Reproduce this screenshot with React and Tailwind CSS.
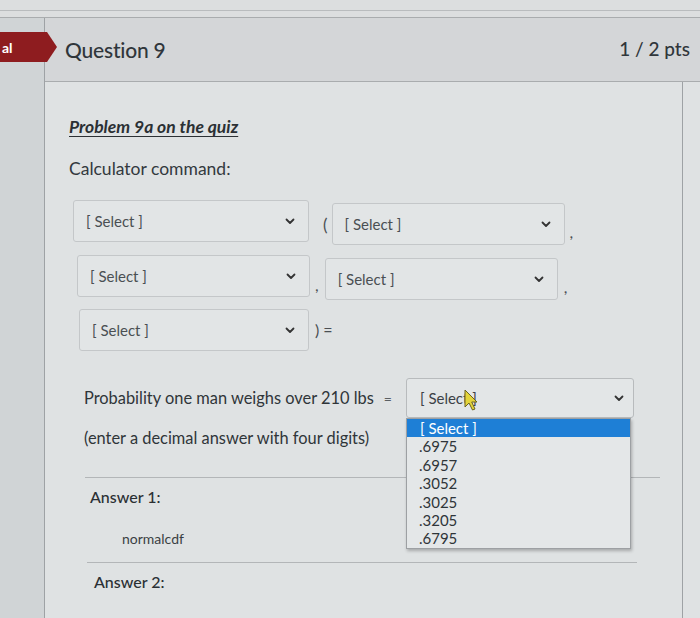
import React from 'react';

const font = { fontFamily: 'Lato, "Open Sans", sans-serif' };

const Chevron = () => (
    <svg width="12" height="12" viewBox="0 0 12 12" className="shrink-0">
        <path d="M2.5 4.5 L6 8 L9.5 4.5" fill="none" stroke="#333" strokeWidth="1.8" strokeLinecap="round" strokeLinejoin="round" />
    </svg>
);

const SelectBox = ({ className = '' }) => (
    <div className={`h-[42px] border border-[#c4c7c9] rounded-[3px] bg-[#e2e5e6] flex items-center justify-between pl-3 pr-3 text-[15px] text-[#4a4f53] ${className}`}>
        <span>[ Select ]</span>
        <Chevron />
    </div>
);

const OPTIONS = ['.6975', '.6957', '.3052', '.3025', '.3205', '.6795'];

const Cursor = () => (
    <svg width="18" height="24" viewBox="0 0 18 24" className="absolute left-[57px] top-[11px] z-20">
        <path d="M2 1 L2 18 L6 14 L9.5 21 L12 20 L8.7 13 L14 13 Z" fill="#e3d43a" stroke="#6b6320" strokeWidth="1" strokeLinejoin="round" />
    </svg>
);

export default function App() {
    return (
        <div className="w-[700px] h-[618px] overflow-hidden bg-[#d9dcdd] flex flex-col relative" style={font}>
            {/* top strip */}
            <div className="h-[18px] shrink-0 border-b border-[#a9acae] bg-[#dcdedf]">
                <div className="h-[11px] border-b border-[#b9bcbe]" />
            </div>

            <div className="flex flex-1 min-h-0">
                {/* left rail */}
                <div className="w-[45px] shrink-0 bg-[#d0d4d6] border-r border-[#9ea2a5]" />

                {/* question card */}
                <div className="flex-1 flex flex-col min-w-0">
                    <div className="h-[64px] shrink-0 bg-[#d4d6d8] border-b border-[#a9acae] flex items-center justify-between pl-[20px] pr-[10px]">
                        <span className="text-[21px] text-[#30363b] font-medium tracking-[-0.2px]">Question 9</span>
                        <span className="text-[19px] text-[#30363b] font-medium">1 / 2 pts</span>
                    </div>

                    <div className="flex-1 bg-[#dfe2e3] flex">
                        <div className="w-[638px] shrink-0 border-r border-[#9ea2a5] pl-[24px] pt-[33px]">
                            <div className="text-[17.5px] font-bold italic underline underline-offset-[3px] text-[#2b3034] leading-[24px]">
                                Problem 9a on the quiz
                            </div>
                            <div className="mt-[18px] text-[17.5px] text-[#33393e] leading-[24px]">Calculator command:</div>

                            <div className="mt-[19px] ml-[4px] flex flex-col gap-[9px] text-[#4a4f53]">
                                <div className="flex items-start h-[46px]">
                                    <SelectBox className="w-[236px]" />
                                    <span className="ml-[14px] mr-[4px] text-[17px] mt-[12px]">(</span>
                                    <SelectBox className="w-[233px] mt-[3px]" />
                                    <span className="ml-[5px] text-[16px] mt-[20px]">,</span>
                                </div>
                                <div className="flex items-start h-[45px]">
                                    <SelectBox className="w-[233px] ml-[4px]" />
                                    <span className="ml-[5px] mr-[6px] text-[16px] mt-[18px]">,</span>
                                    <SelectBox className="w-[233px] mt-[3px]" />
                                    <span className="ml-[6px] text-[16px] mt-[20px]">,</span>
                                </div>
                                <div className="flex items-center">
                                    <SelectBox className="w-[230px] ml-[6px]" />
                                    <span className="ml-[6px] text-[16px]">) =</span>
                                </div>
                            </div>

                            <div className="mt-[27px] ml-[15px] flex items-center">
                                <span className="text-[16.4px] text-[#2f3539]">Probability one man weighs over 210 lbs</span>
                                <span className="ml-[10px] text-[14px] text-[#5a5f63]">=</span>
                                <div className="relative ml-[14px]">
                                    <div className="w-[228px] h-[40px] border border-[#b8bbbd] rounded-[3px] bg-[#e3e6e7] flex items-center justify-between pl-[13px] pr-[8px] text-[15px] text-[#3c4146]">
                                        <span>[ Select ]</span>
                                        <Chevron />
                                    </div>
                                    <Cursor />
                                    <div className="absolute left-0 top-[40px] w-[225px] z-10 bg-[#e4e7e8] border border-[#9da0a3] shadow-[1px_2px_3px_rgba(0,0,0,0.25)] text-[15px] leading-[18.4px] text-[#2f3539]">
                                        <div className="bg-[#1e7fd6] text-white px-[13px]">[ Select ]</div>
                                        {OPTIONS.map((o) => (
                                            <div key={o} className="px-[12px]">{o}</div>
                                        ))}
                                    </div>
                                </div>
                            </div>

                            <div className="mt-[8px] ml-[15px] text-[16.4px] text-[#2f3539] leading-[24px]">
                                (enter a decimal answer with four digits)
                            </div>

                            <div className="mt-[27px] ml-[16px] w-[575px] border-t border-[#b3b6b8]" />
                            <div className="mt-[8px] ml-[21px] text-[16px] font-medium text-[#2b3034] leading-[22px]">Answer 1:</div>
                            <div className="mt-[22px] ml-[53px] text-[14px] text-[#3a3f43] leading-[18px]">normalcdf</div>
                            <div className="mt-[14px] ml-[18px] w-[550px] border-t border-[#b3b6b8]" />
                            <div className="mt-[8px] ml-[25px] text-[16px] font-medium text-[#2b3034] leading-[22px]">Answer 2:</div>
                        </div>
                    </div>
                </div>
            </div>

            {/* red tag overlapping card edge */}
            <div className="absolute left-0 top-[32px] h-[30px] w-[57px] z-10 flex items-center">
                <div className="h-full w-[47px] bg-[#8e1c1f] flex items-center pl-[2px]">
                    <span className="text-white text-[14px] font-bold">al</span>
                </div>
                <div className="h-0 w-0 border-y-[15px] border-y-transparent border-l-[10px] border-l-[#8e1c1f]" />
            </div>
        </div>
    );
}
